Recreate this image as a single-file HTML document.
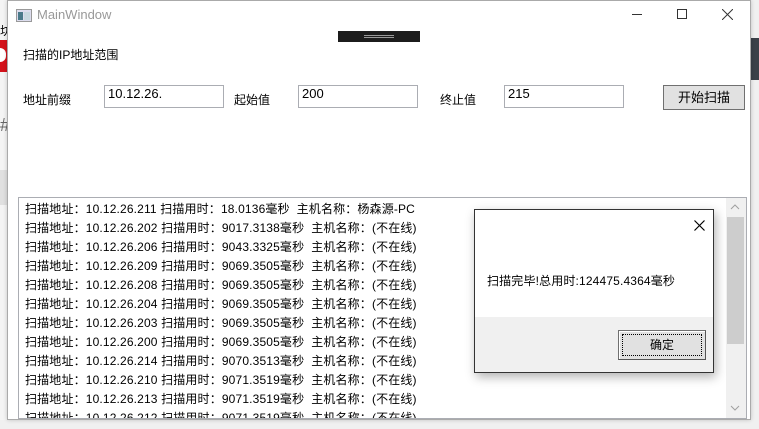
<!DOCTYPE html>
<html><head><meta charset="utf-8"><style>
*{margin:0;padding:0;box-sizing:border-box}
body{width:759px;height:429px;overflow:hidden;background:#fff;position:relative;font-family:"Liberation Sans","Noto Sans CJK SC",sans-serif;font-size:12px;color:#000}
.a{position:absolute}
.tb{border:1px solid #abadb3;background:#fff;font-size:13px;padding:1px 0 0 3px;line-height:14px}
.list div{height:19px;line-height:19px;white-space:nowrap;letter-spacing:0.15px}
</style></head><body>
<div class="a" style="left:0;top:0;width:8px;height:429px;background:#f4f4f4"></div>
<div class="a" style="left:0;top:22px;width:8px;height:14px;font-size:12px;overflow:hidden">坊</div>
<div class="a" style="left:0;top:40px;width:8px;height:32px;background:#d4121b"></div>
<div class="a" style="left:0;top:48px;width:6px;height:14px;background:#fff;border-radius:0 7px 7px 0"></div>
<div class="a" style="left:0;top:115px;width:8px;height:22px;color:#666;font-size:18px">#</div>
<div class="a" style="left:0;top:170px;width:8px;height:35px;background:#e0e0e0"></div>
<div class="a" style="left:751px;top:0;width:8px;height:429px;background:#f0f0f0"></div>
<div class="a" style="left:751px;top:38px;width:8px;height:42px;background:#3a4048"></div>
<div class="a" style="left:0;top:420px;width:759px;height:9px;background:#f0f0f0"></div>
<div class="a" style="left:7px;top:0;width:744px;height:420px;background:#fff;border:1px solid #aaa;box-shadow:0 0 4px rgba(0,0,0,.2)"></div>
<svg class="a" style="left:16px;top:9px" width="16" height="14"><rect x="0.5" y="0.5" width="15" height="12" fill="#dde" stroke="#999"/><rect x="2" y="3" width="5" height="8" fill="#4a7a8a"/><rect x="8" y="3" width="6" height="8" fill="#c8d8e0"/></svg>
<div class="a" style="left:37px;top:7px;font-size:13px;color:#999">MainWindow</div>
<div class="a" style="left:632px;top:14px;width:10px;height:1px;background:#333"></div>
<div class="a" style="left:677px;top:9px;width:10px;height:10px;border:1px solid #333"></div>
<svg class="a" style="left:722px;top:9px" width="11" height="11"><path d="M0 0L11 11M11 0L0 11" stroke="#333"/></svg>
<div class="a" style="left:338px;top:31px;width:82px;height:11px;background:#1c1c1c"></div>
<div class="a" style="left:364px;top:35px;width:30px;height:1px;background:#999"></div>
<div class="a" style="left:364px;top:37px;width:30px;height:1px;background:#999"></div>
<div class="a" style="left:23px;top:46px">扫描的IP地址范围</div>
<div class="a" style="left:23px;top:91px">地址前缀</div>
<div class="a tb" style="left:104px;top:85px;width:120px;height:23px">10.12.26.</div>
<div class="a" style="left:234px;top:91px">起始值</div>
<div class="a tb" style="left:298px;top:85px;width:120px;height:23px">200</div>
<div class="a" style="left:440px;top:91px">终止值</div>
<div class="a tb" style="left:504px;top:85px;width:120px;height:23px">215</div>
<div class="a" style="left:663px;top:85px;width:82px;height:25px;background:#e1e1e1;border:1px solid #707070;text-align:center;line-height:23px;font-size:13px">开始扫描</div>
<div class="a" style="left:18px;top:197px;width:729px;height:222px;border:1px solid #abadb3;overflow:hidden">
<div class="a list" style="left:6px;top:2px;font-size:12px">
<div>扫描地址：10.12.26.211 扫描用时：18.0136毫秒&nbsp; 主机名称：杨森源-PC</div>
<div>扫描地址：10.12.26.202 扫描用时：9017.3138毫秒&nbsp; 主机名称：(不在线)</div>
<div>扫描地址：10.12.26.206 扫描用时：9043.3325毫秒&nbsp; 主机名称：(不在线)</div>
<div>扫描地址：10.12.26.209 扫描用时：9069.3505毫秒&nbsp; 主机名称：(不在线)</div>
<div>扫描地址：10.12.26.208 扫描用时：9069.3505毫秒&nbsp; 主机名称：(不在线)</div>
<div>扫描地址：10.12.26.204 扫描用时：9069.3505毫秒&nbsp; 主机名称：(不在线)</div>
<div>扫描地址：10.12.26.203 扫描用时：9069.3505毫秒&nbsp; 主机名称：(不在线)</div>
<div>扫描地址：10.12.26.200 扫描用时：9069.3505毫秒&nbsp; 主机名称：(不在线)</div>
<div>扫描地址：10.12.26.214 扫描用时：9070.3513毫秒&nbsp; 主机名称：(不在线)</div>
<div>扫描地址：10.12.26.210 扫描用时：9071.3519毫秒&nbsp; 主机名称：(不在线)</div>
<div>扫描地址：10.12.26.213 扫描用时：9071.3519毫秒&nbsp; 主机名称：(不在线)</div>
<div>扫描地址：10.12.26.212 扫描用时：9071.3519毫秒&nbsp; 主机名称：(不在线)</div>
</div>
<div class="a" style="left:707px;top:0;width:20px;height:220px;background:#f0f0f0"></div>
<div class="a" style="left:708px;top:19px;width:17px;height:127px;background:#cdcdcd"></div>
<svg class="a" style="left:711px;top:6px" width="10" height="6"><path d="M1 5L5 1L9 5" stroke="#a0a0a0" fill="none"/></svg>
<svg class="a" style="left:711px;top:207px" width="10" height="6"><path d="M1 1L5 5L9 1" stroke="#a0a0a0" fill="none"/></svg>
</div>
<div class="a" style="left:474px;top:209px;width:240px;height:164px;background:#fff;border:1px solid #333;box-shadow:2px 4px 10px rgba(0,0,0,.3)">
<svg class="a" style="left:219px;top:10px" width="11" height="11"><path d="M0.5 0.5L10.5 10.5M10.5 0.5L0.5 10.5" stroke="#000" stroke-width="1.2"/></svg>
<div class="a" style="left:12px;top:62px;font-size:12px;letter-spacing:0.15px">扫描完毕!总用时:124475.4364毫秒</div>
<div class="a" style="left:0;top:107px;width:238px;height:55px;background:#f0f0f0"></div>
<div class="a" style="left:143px;top:120px;width:88px;height:30px;background:#e1e1e1;border:1px solid #707070;border-right-color:#555;border-bottom-color:#555;box-shadow:inset 1px 1px 0 #fff"></div>
<div class="a" style="left:147px;top:124px;width:80px;height:22px;border:1px dotted #000;text-align:center;line-height:20px;font-size:12px">确定</div>
</div>
</body></html>
